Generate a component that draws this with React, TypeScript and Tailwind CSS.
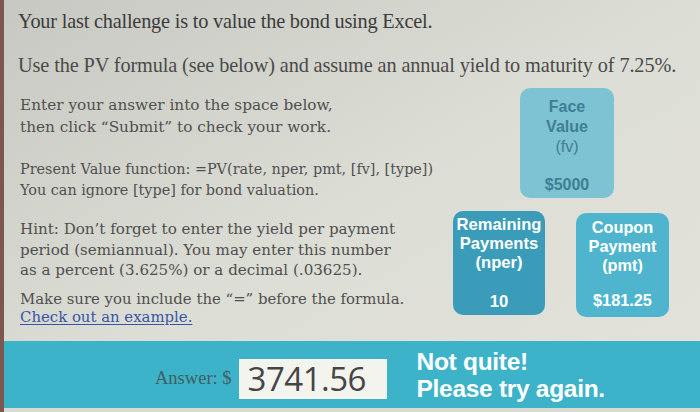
import React from "react";

export default function App() {
  const serif = { fontFamily: '"Liberation Serif", serif' };
  const slab = { fontFamily: '"DejaVu Serif", serif' };
  const sans = { fontFamily: '"Liberation Sans", Arial, sans-serif' };
  return (
    <div className="w-[700px] h-[412px] overflow-hidden relative flex flex-col border-l-[4px] border-[#7e5650] bg-linear-to-br from-[#c7c8c1] via-[#dcddd5] to-[#e3e3db] text-[#4a4a4a]">
      <div className="pl-[14px] pt-[9px] flex flex-col" style={serif}>
        <div className="text-[20.3px] leading-[24px] text-[#3c3c3c] tracking-[-0.2px]">Your last challenge is to value the bond using Excel.</div>
        <div className="text-[20.3px] leading-[24px] mt-[20px] text-[#4a4a4a] tracking-[-0.12px]">Use the PV formula (see below) and assume an annual yield to maturity of 7.25%.</div>
      </div>
      <div className="flex flex-row mt-[10px] h-[248px]">
        <div className="w-[433px] pl-[16px] flex flex-col text-[15.3px] leading-[21.5px] text-[#505050]" style={slab}>
          <div className="mt-[8px]">
            <div>Enter your answer into the space below,</div>
            <div>then click “Submit” to check your work.</div>
          </div>
          <div className="mt-[21px] whitespace-nowrap text-[14.4px] leading-[20.5px]">
            <div>Present Value function: =PV(rate, nper, pmt, [fv], [type])</div>
            <div>You can ignore [type] for bond valuation.</div>
          </div>
          <div className="mt-[19px] text-[15.1px] leading-[20.5px]">
            <div>Hint: Don’t forget to enter the yield per payment</div>
            <div>period (semiannual). You may enter this number</div>
            <div>as a percent (3.625%) or a decimal (.03625).</div>
          </div>
          <div className="mt-[9px] text-[14.9px] leading-[18.5px]">
            <div>Make sure you include the “=” before the formula.</div>
            <div className="text-[#3756a6] underline underline-offset-2">Check out an example.</div>
          </div>
        </div>
        <div className="flex-1 flex flex-col pt-[1px]" style={sans}>
          <div className="ml-[83px] w-[94px] h-[110px] rounded-[10px] bg-[#7ec3d3] text-[#3e7e95] font-bold text-[16px] leading-[20px] flex flex-col items-center pt-[9px]">
            <div>Face</div>
            <div>Value</div>
            <div className="font-normal">(fv)</div>
            <div className="mt-[18px]">$5000</div>
          </div>
          <div className="flex flex-row mt-[13px] ml-[16px] gap-[31px]">
            <div className="w-[92px] h-[104px] rounded-[10px] bg-[#3b9cb9] text-white font-bold text-[16.6px] leading-[19px] flex flex-col items-center pt-[4px]">
              <div>Remaining</div>
              <div>Payments</div>
              <div>(nper)</div>
              <div className="mt-[20px]">10</div>
            </div>
            <div className="w-[93px] h-[104px] mt-[2px] rounded-[10px] bg-[#4fb5cf] text-white font-bold text-[16.3px] leading-[19px] flex flex-col items-center pt-[5px]">
              <div>Coupon</div>
              <div>Payment</div>
              <div>(pmt)</div>
              <div className="mt-[16px]">$181.25</div>
            </div>
          </div>
        </div>
      </div>
      <div className="h-[67px] mt-[6px] bg-[#3db3c9] flex flex-row items-center">
        <div className="ml-[151px] mt-[8px] text-[18.5px] text-[#3f5f63]" style={serif}>Answer: $</div>
        <div className="ml-[7px] w-[148px] h-[40px] bg-[#f4f4ee] flex items-center pl-[9px] text-[33px] tracking-[-0.5px] text-[#454545] mt-[8px]" style={{ fontFamily: '"Open Sans", sans-serif' }}>3741.56</div>
        <div className="ml-[30px] flex flex-col text-white font-bold text-[24.5px] leading-[27px] tracking-[-0.3px]" style={sans}>
          <div>Not quite!</div>
          <div>Please try again.</div>
        </div>
      </div>
      <div className="flex-1 bg-[#d9dad2]"></div>
    </div>
  );
}
